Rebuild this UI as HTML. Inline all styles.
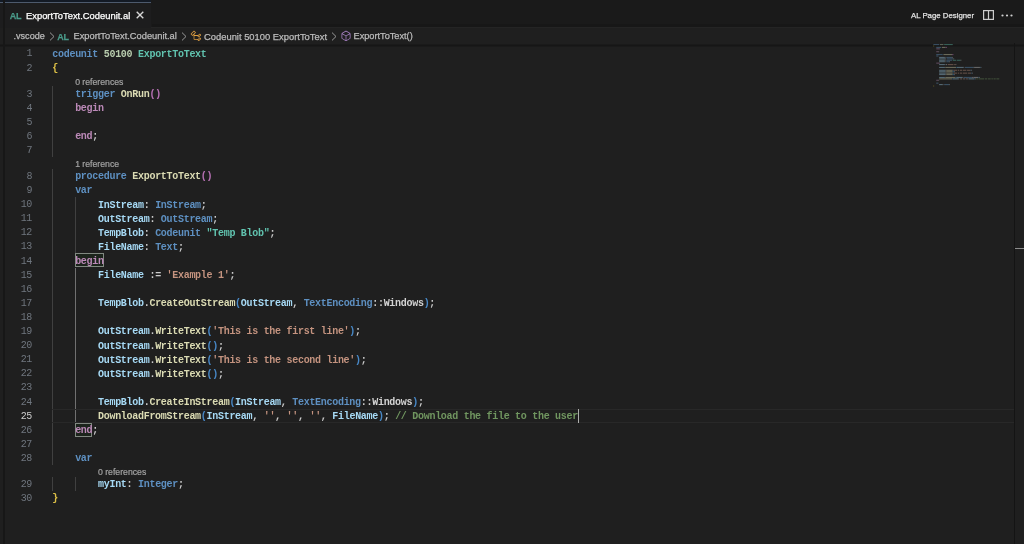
<!DOCTYPE html>
<html><head><meta charset="utf-8"><style>
*{margin:0;padding:0;box-sizing:border-box}
html,body{width:1024px;height:544px;overflow:hidden;background:#1f1f1f}
body{position:relative;font-family:"Liberation Sans",sans-serif}
.wrap{position:absolute;left:0;top:0;width:1024px;height:544px;filter:saturate(0.8) blur(0.3px)}
.tabbar{position:absolute;left:0;top:0;width:1024px;height:27.5px;background:#1a1a1a;border-bottom:1px solid #242424}
.tab{position:absolute;left:0;top:0;width:151px;height:28px;background:#1d1d1e;border-top:2px solid #121a28}
.tabline{position:absolute;left:0;top:2px;width:151px;height:1px;background:#4a5a72}
.crumbs{position:absolute;left:0;top:28px;width:1024px;height:15px;background:#1f1f1f}
.t{position:absolute;white-space:pre;line-height:1;-webkit-text-stroke:0.25px currentColor}
.ln{position:absolute;left:0;width:32.1px;margin-top:1.2px;text-align:right;font-family:"Liberation Mono",monospace;font-size:10px;letter-spacing:-0.29px;line-height:14.1px;color:#6e7681;white-space:pre}
.ln.act{color:#cccccc}
.code{position:absolute;left:52.3px;margin-top:1.5px;font-family:"Liberation Mono",monospace;font-size:10px;letter-spacing:-0.29px;font-weight:bold;line-height:14.1px;white-space:pre;color:#cccccc}
.lens{position:absolute;margin-top:2.3px;font-size:8.7px;line-height:11.9px;color:#a4a4a4;white-space:pre;-webkit-text-stroke:0.2px currentColor}
.kw{color:#5392d0} .ct{color:#c586c0} .nm{color:#b5cea8} .ty{color:#4ec9b0} .fn{color:#dcdcaa} .vr{color:#9cdcfe} .st{color:#ce9178} .cm{color:#6a9955} .pu{color:#cccccc} .wi{color:#d4d4d4}
.b1{color:#e6c229} .b2{color:#c46cc0} .b3{color:#3a8ad8}
.g{position:absolute;width:1px;background:#404040}
.ga{background:#707070}
.curline{position:absolute;left:52px;width:962px;border-top:1px solid #282828;border-bottom:1px solid #282828}
.cursor{position:absolute;width:1px;background:#aeafad}
.shadow{position:absolute;left:0;top:43.5px;width:1024px;height:3px;background:linear-gradient(#1c1c1c,#161616 50%,#1c1c1c)}
.tbdark{position:absolute;left:151.5px;top:24px;width:873px;height:2.5px;background:#171717}
.ovr{position:absolute;left:1013.5px;top:43px;width:1px;height:501px;background:#141414}
.ovmark{position:absolute;left:1014.5px;top:247.5px;width:9.5px;height:1.5px;background:#8c8c8c}
.bm{position:absolute;border:1px solid #7f8a7f;background:rgba(0,100,0,0.1)}
</style></head><body><div class="wrap">
<div class="tabbar"></div>
<div class="tab"></div>
<div class="tabline"></div>
<div class="tbdark"></div>
<div class="crumbs"></div>
<div class="shadow"></div>
<div class="t" style="left:9.8px;top:11.8px;font-size:9px;font-weight:bold;letter-spacing:-0.3px;color:#3a9f8a">AL</div>
<div class="t" style="left:26px;top:11px;font-size:9.4px;color:#ffffff">ExportToText.Codeunit.al</div>
<svg style="position:absolute;left:136px;top:11px" width="8" height="8" viewBox="0 0 8 8"><path d="M0.7 0.7 L7.3 7.3 M7.3 0.7 L0.7 7.3" stroke="#d8d8d8" stroke-width="1.35"/></svg>
<div class="t" style="left:13.5px;top:31.8px;font-size:9.1px;color:#bbbbbb">.vscode</div>
<svg style="position:absolute;left:48.5px;top:32px" width="6" height="9" viewBox="0 0 6 9"><path d="M1 0.6 L5 4.5 L1 8.4" stroke="#9a9a9a" stroke-width="1" fill="none"/></svg>
<div class="t" style="left:57.3px;top:32.8px;font-size:9px;font-weight:bold;letter-spacing:-0.3px;color:#3a9f8a">AL</div>
<div class="t" style="left:73.5px;top:31.8px;font-size:9.3px;color:#bbbbbb">ExportToText.Codeunit.al</div>
<svg style="position:absolute;left:181px;top:32px" width="6" height="9" viewBox="0 0 6 9"><path d="M1 0.6 L5 4.5 L1 8.4" stroke="#9a9a9a" stroke-width="1" fill="none"/></svg>
<svg style="position:absolute;left:189.5px;top:29.8px" width="12" height="12" viewBox="0 0 16 16"><path fill="#ee9d28" d="M11.34 9.71h.71l2.67-2.67v-.71L13.38 5h-.7l-1.82 1.81h-5V5.56l1.86-1.85V3l-2-2H5L1 5v.71l2 2h.71l1.14-1.15v5.79l.5.5H10v.52l1.33 1.34h.71l2.67-2.670v-.71L13.37 10h-.7l-1.86 1.85h-5v-4H10v.48l1.34 1.38zm1.69-3.65l.63.63-2 2-.63-.63 2-2zm0 5l.63.63-2 2-.63-.63 2-2zM3.350 6.65l-1.29-1.3 3.29-3.29 1.3 1.29-3.3 3.3z"/></svg>
<div class="t" style="left:204px;top:31.8px;font-size:9.4px;color:#bbbbbb">Codeunit 50100 ExportToText</div>
<svg style="position:absolute;left:331px;top:32px" width="6" height="9" viewBox="0 0 6 9"><path d="M1 0.6 L5 4.5 L1 8.4" stroke="#9a9a9a" stroke-width="1" fill="none"/></svg>
<svg style="position:absolute;left:339.5px;top:29.8px" width="12" height="12" viewBox="0 0 16 16"><path fill="#b180d7" d="M13.51 4l-5-3h-1l-5 3-.49.86v6l.49.85 5 3h1l5-3 .49-.85v-6L13.51 4zm-6 9.56l-4.5-2.7V5.7l4.5 2.45v5.41zM3.27 4.7l4.740-2.84 4.74 2.84-4.74 2.59L3.27 4.7zM13 10.86l-4.5 2.7V8.15L13 5.7v5.16z"/></svg>
<div class="t" style="left:353.5px;top:31.8px;font-size:9.2px;color:#bbbbbb">ExportToText()</div>
<div class="t" style="left:911px;top:11.5px;font-size:7.8px;color:#e0e0e0">AL Page Designer</div>
<svg style="position:absolute;left:982.5px;top:9.5px" width="11" height="10" viewBox="0 0 11 10"><rect x="0.6" y="0.6" width="9.8" height="8.8" fill="none" stroke="#cccccc" stroke-width="1.2"/><path d="M5.5 0.6 V9.4" stroke="#cccccc" stroke-width="1.2"/></svg>
<svg style="position:absolute;left:1001px;top:13.5px" width="12" height="3" viewBox="0 0 12 3"><circle cx="1.5" cy="1.5" r="1.1" fill="#d0d0d0"/><circle cx="6" cy="1.5" r="1.1" fill="#d0d0d0"/><circle cx="10.5" cy="1.5" r="1.1" fill="#d0d0d0"/></svg>
<svg style="position:absolute;left:924px;top:0" width="100" height="100" viewBox="0 0 100 100"><g opacity="0.4"><rect x="9.40" y="44.00" width="5.73" height="1.1" fill="#569cd6"/><rect x="15.84" y="44.00" width="3.58" height="1.1" fill="#b5cea8"/><rect x="20.14" y="44.00" width="8.59" height="1.1" fill="#4ec9b0"/><rect x="9.40" y="45.43" width="0.72" height="1.1" fill="#ffd700"/><rect x="12.26" y="46.86" width="5.01" height="1.1" fill="#569cd6"/><rect x="17.99" y="46.86" width="3.58" height="1.1" fill="#dcdcaa"/><rect x="21.57" y="46.86" width="1.43" height="1.1" fill="#da70d6"/><rect x="12.26" y="48.29" width="3.58" height="1.1" fill="#c586c0"/><rect x="12.26" y="51.15" width="2.15" height="1.1" fill="#c586c0"/><rect x="14.41" y="51.15" width="0.72" height="1.1" fill="#cccccc"/><rect x="12.26" y="54.01" width="6.44" height="1.1" fill="#569cd6"/><rect x="19.42" y="54.01" width="8.59" height="1.1" fill="#dcdcaa"/><rect x="28.02" y="54.01" width="1.43" height="1.1" fill="#da70d6"/><rect x="12.26" y="55.44" width="2.15" height="1.1" fill="#569cd6"/><rect x="15.13" y="56.87" width="5.73" height="1.1" fill="#9cdcfe"/><rect x="20.86" y="56.87" width="0.72" height="1.1" fill="#cccccc"/><rect x="22.29" y="56.87" width="5.73" height="1.1" fill="#569cd6"/><rect x="28.02" y="56.87" width="0.72" height="1.1" fill="#cccccc"/><rect x="15.13" y="58.30" width="6.44" height="1.1" fill="#9cdcfe"/><rect x="21.57" y="58.30" width="0.72" height="1.1" fill="#cccccc"/><rect x="23.00" y="58.30" width="6.44" height="1.1" fill="#569cd6"/><rect x="29.45" y="58.30" width="0.72" height="1.1" fill="#cccccc"/><rect x="15.13" y="59.73" width="5.73" height="1.1" fill="#9cdcfe"/><rect x="20.86" y="59.73" width="0.72" height="1.1" fill="#cccccc"/><rect x="22.29" y="59.73" width="5.73" height="1.1" fill="#569cd6"/><rect x="28.73" y="59.73" width="3.58" height="1.1" fill="#4ec9b0"/><rect x="33.03" y="59.73" width="3.58" height="1.1" fill="#4ec9b0"/><rect x="36.61" y="59.73" width="0.72" height="1.1" fill="#cccccc"/><rect x="15.13" y="61.16" width="5.73" height="1.1" fill="#9cdcfe"/><rect x="20.86" y="61.16" width="0.72" height="1.1" fill="#cccccc"/><rect x="22.29" y="61.16" width="2.86" height="1.1" fill="#569cd6"/><rect x="25.15" y="61.16" width="0.72" height="1.1" fill="#cccccc"/><rect x="12.26" y="62.59" width="3.58" height="1.1" fill="#c586c0"/><rect x="15.13" y="64.02" width="5.73" height="1.1" fill="#9cdcfe"/><rect x="21.57" y="64.02" width="1.43" height="1.1" fill="#cccccc"/><rect x="23.72" y="64.02" width="5.73" height="1.1" fill="#ce9178"/><rect x="30.16" y="64.02" width="1.43" height="1.1" fill="#ce9178"/><rect x="31.60" y="64.02" width="0.72" height="1.1" fill="#cccccc"/><rect x="15.13" y="66.88" width="5.73" height="1.1" fill="#9cdcfe"/><rect x="20.86" y="66.88" width="0.72" height="1.1" fill="#cccccc"/><rect x="21.57" y="66.88" width="10.74" height="1.1" fill="#dcdcaa"/><rect x="32.31" y="66.88" width="0.72" height="1.1" fill="#179fff"/><rect x="33.03" y="66.88" width="6.44" height="1.1" fill="#9cdcfe"/><rect x="39.47" y="66.88" width="0.72" height="1.1" fill="#cccccc"/><rect x="40.90" y="66.88" width="8.59" height="1.1" fill="#569cd6"/><rect x="49.50" y="66.88" width="1.43" height="1.1" fill="#cccccc"/><rect x="50.93" y="66.88" width="5.01" height="1.1" fill="#d4d4d4"/><rect x="55.94" y="66.88" width="0.72" height="1.1" fill="#179fff"/><rect x="56.66" y="66.88" width="0.72" height="1.1" fill="#cccccc"/><rect x="15.13" y="69.74" width="6.44" height="1.1" fill="#9cdcfe"/><rect x="21.57" y="69.74" width="0.72" height="1.1" fill="#cccccc"/><rect x="22.29" y="69.74" width="6.44" height="1.1" fill="#dcdcaa"/><rect x="28.73" y="69.74" width="0.72" height="1.1" fill="#179fff"/><rect x="29.45" y="69.74" width="3.58" height="1.1" fill="#ce9178"/><rect x="33.74" y="69.74" width="1.43" height="1.1" fill="#ce9178"/><rect x="35.89" y="69.74" width="2.15" height="1.1" fill="#ce9178"/><rect x="38.76" y="69.74" width="3.58" height="1.1" fill="#ce9178"/><rect x="43.05" y="69.74" width="3.58" height="1.1" fill="#ce9178"/><rect x="46.63" y="69.74" width="0.72" height="1.1" fill="#179fff"/><rect x="47.35" y="69.74" width="0.72" height="1.1" fill="#cccccc"/><rect x="15.13" y="71.17" width="6.44" height="1.1" fill="#9cdcfe"/><rect x="21.57" y="71.17" width="0.72" height="1.1" fill="#cccccc"/><rect x="22.29" y="71.17" width="6.44" height="1.1" fill="#dcdcaa"/><rect x="28.73" y="71.17" width="1.43" height="1.1" fill="#179fff"/><rect x="30.16" y="71.17" width="0.72" height="1.1" fill="#cccccc"/><rect x="15.13" y="72.60" width="6.44" height="1.1" fill="#9cdcfe"/><rect x="21.57" y="72.60" width="0.72" height="1.1" fill="#cccccc"/><rect x="22.29" y="72.60" width="6.44" height="1.1" fill="#dcdcaa"/><rect x="28.73" y="72.60" width="0.72" height="1.1" fill="#179fff"/><rect x="29.45" y="72.60" width="3.58" height="1.1" fill="#ce9178"/><rect x="33.74" y="72.60" width="1.43" height="1.1" fill="#ce9178"/><rect x="35.89" y="72.60" width="2.15" height="1.1" fill="#ce9178"/><rect x="38.76" y="72.60" width="4.30" height="1.1" fill="#ce9178"/><rect x="43.77" y="72.60" width="3.58" height="1.1" fill="#ce9178"/><rect x="47.35" y="72.60" width="0.72" height="1.1" fill="#179fff"/><rect x="48.06" y="72.60" width="0.72" height="1.1" fill="#cccccc"/><rect x="15.13" y="74.03" width="6.44" height="1.1" fill="#9cdcfe"/><rect x="21.57" y="74.03" width="0.72" height="1.1" fill="#cccccc"/><rect x="22.29" y="74.03" width="6.44" height="1.1" fill="#dcdcaa"/><rect x="28.73" y="74.03" width="1.43" height="1.1" fill="#179fff"/><rect x="30.16" y="74.03" width="0.72" height="1.1" fill="#cccccc"/><rect x="15.13" y="76.89" width="5.73" height="1.1" fill="#9cdcfe"/><rect x="20.86" y="76.89" width="0.72" height="1.1" fill="#cccccc"/><rect x="21.57" y="76.89" width="10.02" height="1.1" fill="#dcdcaa"/><rect x="31.60" y="76.89" width="0.72" height="1.1" fill="#179fff"/><rect x="32.31" y="76.89" width="5.73" height="1.1" fill="#9cdcfe"/><rect x="38.04" y="76.89" width="0.72" height="1.1" fill="#cccccc"/><rect x="39.47" y="76.89" width="8.59" height="1.1" fill="#569cd6"/><rect x="48.06" y="76.89" width="1.43" height="1.1" fill="#cccccc"/><rect x="49.50" y="76.89" width="5.01" height="1.1" fill="#d4d4d4"/><rect x="54.51" y="76.89" width="0.72" height="1.1" fill="#179fff"/><rect x="55.22" y="76.89" width="0.72" height="1.1" fill="#cccccc"/><rect x="15.13" y="78.32" width="12.89" height="1.1" fill="#dcdcaa"/><rect x="28.02" y="78.32" width="0.72" height="1.1" fill="#179fff"/><rect x="28.73" y="78.32" width="5.73" height="1.1" fill="#9cdcfe"/><rect x="34.46" y="78.32" width="0.72" height="1.1" fill="#cccccc"/><rect x="35.89" y="78.32" width="1.43" height="1.1" fill="#ce9178"/><rect x="37.32" y="78.32" width="0.72" height="1.1" fill="#cccccc"/><rect x="38.76" y="78.32" width="1.43" height="1.1" fill="#ce9178"/><rect x="40.19" y="78.32" width="0.72" height="1.1" fill="#cccccc"/><rect x="41.62" y="78.32" width="1.43" height="1.1" fill="#ce9178"/><rect x="43.05" y="78.32" width="0.72" height="1.1" fill="#cccccc"/><rect x="44.48" y="78.32" width="5.73" height="1.1" fill="#9cdcfe"/><rect x="50.21" y="78.32" width="0.72" height="1.1" fill="#179fff"/><rect x="50.93" y="78.32" width="0.72" height="1.1" fill="#cccccc"/><rect x="52.36" y="78.32" width="1.43" height="1.1" fill="#6a9955"/><rect x="54.51" y="78.32" width="5.73" height="1.1" fill="#6a9955"/><rect x="60.95" y="78.32" width="2.15" height="1.1" fill="#6a9955"/><rect x="63.82" y="78.32" width="2.86" height="1.1" fill="#6a9955"/><rect x="67.40" y="78.32" width="1.43" height="1.1" fill="#6a9955"/><rect x="69.54" y="78.32" width="2.15" height="1.1" fill="#6a9955"/><rect x="72.41" y="78.32" width="2.86" height="1.1" fill="#6a9955"/><rect x="12.26" y="79.75" width="2.15" height="1.1" fill="#c586c0"/><rect x="14.41" y="79.75" width="0.72" height="1.1" fill="#cccccc"/><rect x="12.26" y="82.61" width="2.15" height="1.1" fill="#569cd6"/><rect x="15.13" y="84.04" width="3.58" height="1.1" fill="#9cdcfe"/><rect x="18.71" y="84.04" width="0.72" height="1.1" fill="#cccccc"/><rect x="20.14" y="84.04" width="5.01" height="1.1" fill="#569cd6"/><rect x="25.15" y="84.04" width="0.72" height="1.1" fill="#cccccc"/><rect x="9.40" y="85.47" width="0.72" height="1.1" fill="#ffd700"/></g></svg>
<div class="ovr"></div>
<div style="position:absolute;left:3px;top:0;width:2px;height:544px;background:#171717"></div>
<div class="ovmark"></div>
<div class="g" style="left:52.30px;top:86.40px;height:70.50px"></div><div class="g" style="left:52.30px;top:168.80px;height:296.10px"></div><div class="g" style="left:52.30px;top:476.80px;height:14.10px"></div><div class="g" style="left:75.14px;top:197.00px;height:56.40px"></div><div class="g ga" style="left:75.14px;top:267.50px;height:155.10px"></div><div class="g" style="left:75.14px;top:476.80px;height:14.10px"></div>

<div class="curline" style="top:408.50px;height:14.10px"></div>
<div class="cursor" style="top:408.50px;left:577.62px;height:14.10px"></div>
<div class="bm" style="top:253.40px;left:75.14px;width:28.55px;height:14.10px"></div>
<div class="bm" style="top:422.60px;left:75.14px;width:17.13px;height:14.10px"></div>

<div class="ln" style="top:46.30px">1</div><div class="code" style="top:46.30px"><span class="kw">codeunit</span><span class="pu"> </span><span class="nm">50100</span><span class="pu"> </span><span class="ty">ExportToText</span></div><div class="ln" style="top:60.40px">2</div><div class="code" style="top:60.40px"><span class="b1">{</span></div><div class="lens" style="top:74.50px;left:75.14px">0 references</div><div class="ln" style="top:86.40px">3</div><div class="code" style="top:86.40px"><span class="pu">    </span><span class="kw">trigger</span><span class="pu"> </span><span class="fn">OnRun</span><span class="b2">()</span></div><div class="ln" style="top:100.50px">4</div><div class="code" style="top:100.50px"><span class="pu">    </span><span class="ct">begin</span></div><div class="ln" style="top:114.60px">5</div><div class="ln" style="top:128.70px">6</div><div class="code" style="top:128.70px"><span class="pu">    </span><span class="ct">end</span><span class="pu">;</span></div><div class="ln" style="top:142.80px">7</div><div class="lens" style="top:156.90px;left:75.14px">1 reference</div><div class="ln" style="top:168.80px">8</div><div class="code" style="top:168.80px"><span class="pu">    </span><span class="kw">procedure</span><span class="pu"> </span><span class="fn">ExportToText</span><span class="b2">()</span></div><div class="ln" style="top:182.90px">9</div><div class="code" style="top:182.90px"><span class="pu">    </span><span class="kw">var</span></div><div class="ln" style="top:197.00px">10</div><div class="code" style="top:197.00px"><span class="pu">        </span><span class="vr">InStream</span><span class="pu">: </span><span class="kw">InStream</span><span class="pu">;</span></div><div class="ln" style="top:211.10px">11</div><div class="code" style="top:211.10px"><span class="pu">        </span><span class="vr">OutStream</span><span class="pu">: </span><span class="kw">OutStream</span><span class="pu">;</span></div><div class="ln" style="top:225.20px">12</div><div class="code" style="top:225.20px"><span class="pu">        </span><span class="vr">TempBlob</span><span class="pu">: </span><span class="kw">Codeunit</span><span class="pu"> </span><span class="ty">&quot;Temp Blob&quot;</span><span class="pu">;</span></div><div class="ln" style="top:239.30px">13</div><div class="code" style="top:239.30px"><span class="pu">        </span><span class="vr">FileName</span><span class="pu">: </span><span class="kw">Text</span><span class="pu">;</span></div><div class="ln" style="top:253.40px">14</div><div class="code" style="top:253.40px"><span class="pu">    </span><span class="ct">begin</span></div><div class="ln" style="top:267.50px">15</div><div class="code" style="top:267.50px"><span class="pu">        </span><span class="vr">FileName</span><span class="pu"> := </span><span class="st">&#x27;Example 1&#x27;</span><span class="pu">;</span></div><div class="ln" style="top:281.60px">16</div><div class="ln" style="top:295.70px">17</div><div class="code" style="top:295.70px"><span class="pu">        </span><span class="vr">TempBlob</span><span class="pu">.</span><span class="fn">CreateOutStream</span><span class="b3">(</span><span class="vr">OutStream</span><span class="pu">, </span><span class="kw">TextEncoding</span><span class="pu">::</span><span class="wi">Windows</span><span class="b3">)</span><span class="pu">;</span></div><div class="ln" style="top:309.80px">18</div><div class="ln" style="top:323.90px">19</div><div class="code" style="top:323.90px"><span class="pu">        </span><span class="vr">OutStream</span><span class="pu">.</span><span class="fn">WriteText</span><span class="b3">(</span><span class="st">&#x27;This is the first line&#x27;</span><span class="b3">)</span><span class="pu">;</span></div><div class="ln" style="top:338.00px">20</div><div class="code" style="top:338.00px"><span class="pu">        </span><span class="vr">OutStream</span><span class="pu">.</span><span class="fn">WriteText</span><span class="b3">()</span><span class="pu">;</span></div><div class="ln" style="top:352.10px">21</div><div class="code" style="top:352.10px"><span class="pu">        </span><span class="vr">OutStream</span><span class="pu">.</span><span class="fn">WriteText</span><span class="b3">(</span><span class="st">&#x27;This is the second line&#x27;</span><span class="b3">)</span><span class="pu">;</span></div><div class="ln" style="top:366.20px">22</div><div class="code" style="top:366.20px"><span class="pu">        </span><span class="vr">OutStream</span><span class="pu">.</span><span class="fn">WriteText</span><span class="b3">()</span><span class="pu">;</span></div><div class="ln" style="top:380.30px">23</div><div class="ln" style="top:394.40px">24</div><div class="code" style="top:394.40px"><span class="pu">        </span><span class="vr">TempBlob</span><span class="pu">.</span><span class="fn">CreateInStream</span><span class="b3">(</span><span class="vr">InStream</span><span class="pu">, </span><span class="kw">TextEncoding</span><span class="pu">::</span><span class="wi">Windows</span><span class="b3">)</span><span class="pu">;</span></div><div class="ln act" style="top:408.50px">25</div><div class="code" style="top:408.50px"><span class="pu">        </span><span class="fn">DownloadFromStream</span><span class="b3">(</span><span class="vr">InStream</span><span class="pu">, </span><span class="st">&#x27;&#x27;</span><span class="pu">, </span><span class="st">&#x27;&#x27;</span><span class="pu">, </span><span class="st">&#x27;&#x27;</span><span class="pu">, </span><span class="vr">FileName</span><span class="b3">)</span><span class="pu">; </span><span class="cm">// Download the file to the user</span></div><div class="ln" style="top:422.60px">26</div><div class="code" style="top:422.60px"><span class="pu">    </span><span class="ct">end</span><span class="pu">;</span></div><div class="ln" style="top:436.70px">27</div><div class="ln" style="top:450.80px">28</div><div class="code" style="top:450.80px"><span class="pu">    </span><span class="kw">var</span></div><div class="lens" style="top:464.90px;left:97.98px">0 references</div><div class="ln" style="top:476.80px">29</div><div class="code" style="top:476.80px"><span class="pu">        </span><span class="vr">myInt</span><span class="pu">: </span><span class="kw">Integer</span><span class="pu">;</span></div><div class="ln" style="top:490.90px">30</div><div class="code" style="top:490.90px"><span class="b1">}</span></div>
</div></body></html>
